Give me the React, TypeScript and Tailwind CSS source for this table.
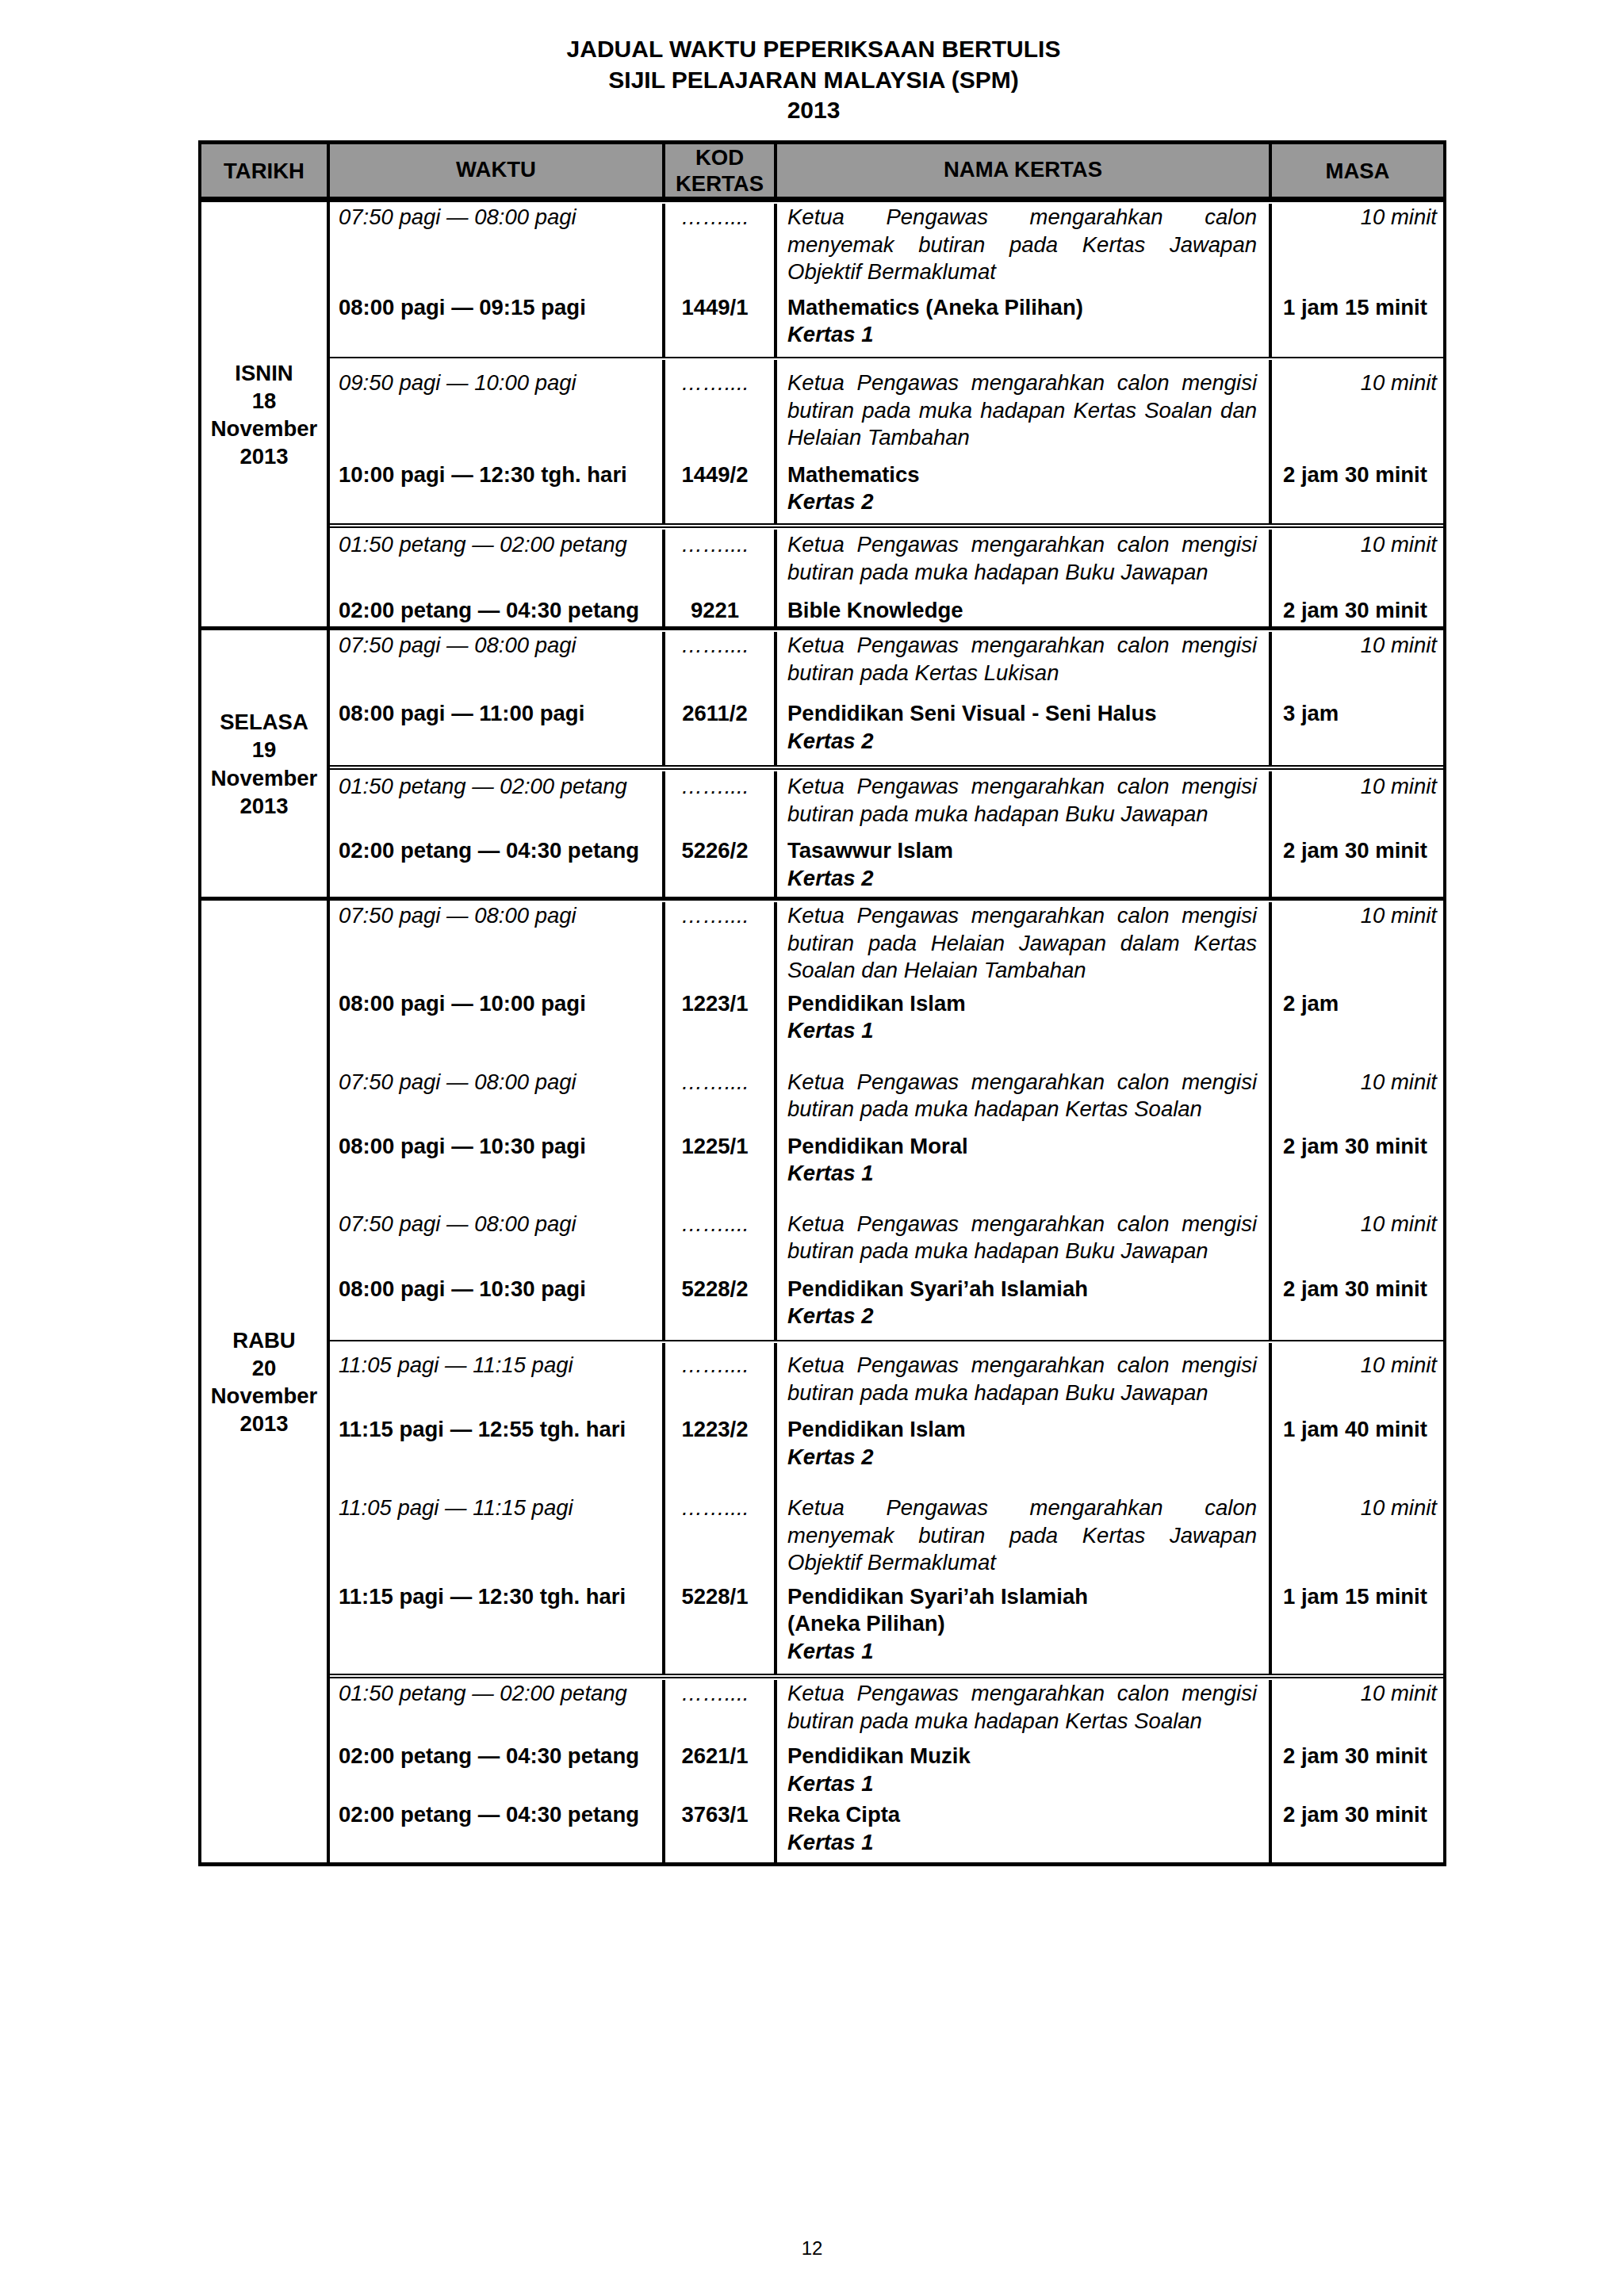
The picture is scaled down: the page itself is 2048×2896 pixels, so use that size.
type Entry = {
  kind: 'instr' | 'exam';
  pad: string;
  time: string;
  code: string;
  name: string[];
  sub?: string;
  masa: string;
};

type Group = { h: string; rows: Entry[]; after?: 'single' | 'double' };

type Day = { label: string[]; groups: Group[] };

const DOTS = '……....';

const instr = (pad: string, time: string, name: string[]): Entry => ({
  kind: 'instr',
  pad,
  time,
  code: DOTS,
  name,
  masa: '10 minit',
});

const exam = (pad: string, time: string, code: string, name: string[], sub: string, masa: string): Entry => ({
  kind: 'exam',
  pad,
  time,
  code,
  name,
  sub,
  masa,
});

const MENGISI = 'Ketua Pengawas mengarahkan calon mengisi';
const MENYEMAK = ['Ketua Pengawas mengarahkan calon', 'menyemak butiran pada Kertas Jawapan', 'Objektif Bermaklumat'];
const BUKU = [MENGISI, 'butiran pada muka hadapan Buku Jawapan'];
const SOALAN = [MENGISI, 'butiran pada muka hadapan Kertas Soalan'];

const days: Day[] = [
  {
    label: ['ISNIN', '18', 'November', '2013'],
    groups: [
      {
        h: 'h-[195px]',
        after: 'single',
        rows: [
          instr('pt-0', '07:50 pagi — 08:00 pagi', MENYEMAK),
          exam('pt-[10px]', '08:00 pagi — 09:15 pagi', '1449/1', ['Mathematics (Aneka Pilihan)'], 'Kertas 1', '1 jam 15 minit'),
        ],
      },
      {
        h: 'h-[208px]',
        after: 'double',
        rows: [
          instr('pt-[12px]', '09:50 pagi — 10:00 pagi', [MENGISI, 'butiran pada muka hadapan Kertas Soalan dan', 'Helaian Tambahan']),
          exam('pt-[12px]', '10:00 pagi — 12:30 tgh. hari', '1449/2', ['Mathematics'], 'Kertas 2', '2 jam 30 minit'),
        ],
      },
      {
        h: 'h-[124px]',
        rows: [
          instr('pt-[2px]', '01:50 petang — 02:00 petang', BUKU),
          exam('pt-[14px]', '02:00 petang — 04:30 petang', '9221', ['Bible Knowledge'], '', '2 jam 30 minit'),
        ],
      },
    ],
  },
  {
    label: ['SELASA', '19', 'November', '2013'],
    groups: [
      {
        h: 'h-[170px]',
        after: 'double',
        rows: [
          instr('pt-0', '07:50 pagi — 08:00 pagi', [MENGISI, 'butiran pada Kertas Lukisan']),
          exam('pt-[17px]', '08:00 pagi — 11:00 pagi', '2611/2', ['Pendidikan Seni Visual - Seni Halus'], 'Kertas 2', '3 jam'),
        ],
      },
      {
        h: 'h-[160px]',
        rows: [
          instr('pt-[2px]', '01:50 petang — 02:00 petang', BUKU),
          exam('pt-[12px]', '02:00 petang — 04:30 petang', '5226/2', ['Tasawwur Islam'], 'Kertas 2', '2 jam 30 minit'),
        ],
      },
    ],
  },
  {
    label: ['RABU', '20', 'November', '2013'],
    groups: [
      {
        h: 'h-[554px]',
        after: 'single',
        rows: [
          instr('pt-0', '07:50 pagi — 08:00 pagi', [MENGISI, 'butiran pada Helaian Jawapan dalam Kertas', 'Soalan dan Helaian Tambahan']),
          exam('pt-[7px]', '08:00 pagi — 10:00 pagi', '1223/1', ['Pendidikan Islam'], 'Kertas 1', '2 jam'),
          instr('pt-[30px]', '07:50 pagi — 08:00 pagi', SOALAN),
          exam('pt-[12px]', '08:00 pagi — 10:30 pagi', '1225/1', ['Pendidikan Moral'], 'Kertas 1', '2 jam 30 minit'),
          instr('pt-[29px]', '07:50 pagi — 08:00 pagi', BUKU),
          exam('pt-[13px]', '08:00 pagi — 10:30 pagi', '5228/2', ['Pendidikan Syari’ah Islamiah'], 'Kertas 2', '2 jam 30 minit'),
        ],
      },
      {
        h: 'h-[419px]',
        after: 'double',
        rows: [
          instr('pt-[11px]', '11:05 pagi — 11:15 pagi', BUKU),
          exam('pt-[12px]', '11:15 pagi — 12:55 tgh. hari', '1223/2', ['Pendidikan Islam'], 'Kertas 2', '1 jam 40 minit'),
          instr('pt-[30px]', '11:05 pagi — 11:15 pagi', MENYEMAK),
          exam('pt-[8px]', '11:15 pagi — 12:30 tgh. hari', '5228/1', ['Pendidikan Syari’ah Islamiah', '(Aneka Pilihan)'], 'Kertas 1', '1 jam 15 minit'),
        ],
      },
      {
        h: 'h-[232px]',
        rows: [
          instr('pt-0', '01:50 petang — 02:00 petang', SOALAN),
          exam('pt-[10px]', '02:00 petang — 04:30 petang', '2621/1', ['Pendidikan Muzik'], 'Kertas 1', '2 jam 30 minit'),
          exam('pt-[5px]', '02:00 petang — 04:30 petang', '3763/1', ['Reka Cipta'], 'Kertas 1', '2 jam 30 minit'),
        ],
      },
    ],
  },
];

function Row({ e, last }: { e: Entry; last: boolean }) {
  const isInstr = e.kind === 'instr';
  const tone = isInstr ? 'italic' : 'font-bold';
  return (
    <div className={`grid grid-cols-[423px_141px_624px_216px] ${last ? 'flex-1' : ''}`}>
      <div className={`border-r-4 border-black pl-[11px] ${tone} ${e.pad}`}>{e.time}</div>
      <div className={`border-r-4 border-black pr-[12px] text-center ${tone} ${e.pad}`}>{e.code}</div>
      <div className={`border-r-4 border-black pl-[13px] pr-[15px] ${e.pad}`}>
        {e.name.map((line, i) =>
          isInstr ? (
            <div
              key={i}
              className={`italic ${i < e.name.length - 1 ? 'text-justify [text-align-last:justify]' : ''}`}
            >
              {line}
            </div>
          ) : (
            <div key={i} className="font-bold">
              {line}
            </div>
          ),
        )}
        {e.sub && <div className="font-bold italic">{e.sub}</div>}
      </div>
      <div className={`${isInstr ? 'pr-[8px] text-right italic' : 'pl-[14px] font-bold'} ${e.pad}`}>{e.masa}</div>
    </div>
  );
}

function Divider({ kind }: { kind: 'single' | 'double' }) {
  if (kind === 'single') return <div className="h-[2px] bg-black" />;
  return <div className="h-[6px] border-y-2 border-black" />;
}

export default function App() {
  return (
    <div className="w-[2048px] min-h-[2896px] bg-white text-black font-['Liberation_Sans',Arial,sans-serif]">
      <div className="pt-[43px] pl-[4px] text-center text-[30px] font-bold leading-[38.7px]">
        <div>JADUAL WAKTU PEPERIKSAAN BERTULIS</div>
        <div>SIJIL PELAJARAN MALAYSIA (SPM)</div>
        <div>2013</div>
      </div>

      <div className="mt-[18px] ml-[250px] w-[1574px] border-x-4 border-y-[5px] border-black text-[27.5px] leading-[34.5px]">
        <div className="grid h-[73px] grid-cols-[162px_423px_141px_624px_216px] border-b-[7px] border-black bg-[#999999] font-bold">
          <div className="flex items-center justify-center border-r-4 border-black pt-[2px]">TARIKH</div>
          <div className="flex items-center justify-center border-r-4 border-black pb-[1px]">WAKTU</div>
          <div className="flex flex-col items-center justify-center border-r-4 border-black leading-[33px]">
            <span>KOD</span>
            <span>KERTAS</span>
          </div>
          <div className="flex items-center justify-center border-r-4 border-black pb-[1px]">NAMA KERTAS</div>
          <div className="flex items-center justify-center pt-[2px]">MASA</div>
        </div>

        {days.map((d, di) => (
          <div key={d.label[0]} className={`flex ${di < days.length - 1 ? 'border-b-[5px] border-black' : ''}`}>
            <div className="flex w-[162px] shrink-0 flex-col items-center justify-center border-r-4 border-black pt-[1px] font-bold leading-[35.3px]">
              {d.label.map((l) => (
                <div key={l}>{l}</div>
              ))}
            </div>
            <div className="flex w-[1404px] flex-col">
              {d.groups.map((g, gi) => (
                <div key={gi}>
                  <div className={`flex flex-col pt-[2px] ${g.h}`}>
                    {g.rows.map((e, ri) => (
                      <Row key={ri} e={e} last={ri === g.rows.length - 1} />
                    ))}
                  </div>
                  {g.after && <Divider kind={g.after} />}
                </div>
              ))}
            </div>
          </div>
        ))}
      </div>

      <div className="mt-[470px] text-center text-[24px] leading-[24px]">12</div>
    </div>
  );
}
